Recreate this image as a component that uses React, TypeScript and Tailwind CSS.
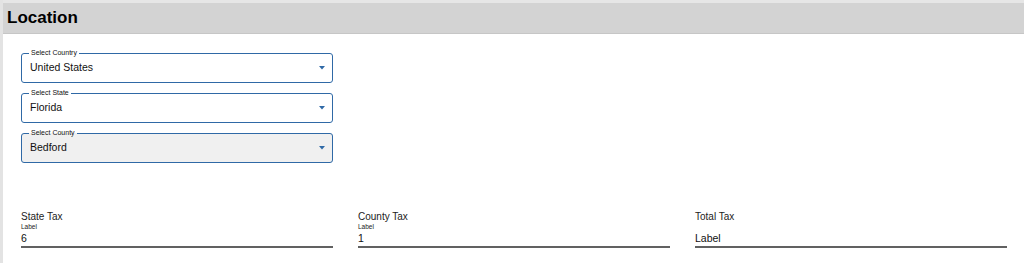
import React from "react";

type SelectProps = { label: string; value: string; filled?: boolean };

const Caret = () => (
  <svg width="6" height="4" viewBox="0 0 6 4" className="shrink-0">
    <path d="M0 0 L6 0 L3 3.5 Z" fill="#2f69a6" />
  </svg>
);

const SelectField: React.FC<SelectProps> = ({ label, value, filled }) => (
  <fieldset
    className={`w-[312px] h-[34px] rounded-[3px] border border-[#2f69a6] pl-[8px] pr-[7px] ${
      filled ? "bg-[#f0f0f0]" : "bg-white"
    }`}
  >
    <legend className="ml-[-1px] px-[2px] text-[7px] leading-[8px] text-[#111]">{label}</legend>
    <div className="flex h-[22px] items-center justify-between">
      <span className="text-[10.5px] text-[#111]">{value}</span>
      <Caret />
    </div>
  </fieldset>
);

type TaxProps = { title: string; sub?: string; value: string };

const TaxField: React.FC<TaxProps> = ({ title, sub, value }) => (
  <div className="flex flex-col">
    <span className="text-[10px] leading-[12px] text-[#222]">{title}</span>
    <span className="h-[8px] text-[6.5px] leading-[8px] text-[#222]">{sub ?? ""}</span>
    <span className="text-[10.5px] leading-[14px] text-[#111]">{value}</span>
    <div className="mt-[1px] h-[2px] bg-[#616161]" />
  </div>
);

export default function App() {
  return (
    <div
      className="h-[263px] w-[1024px] overflow-hidden border-l-[3px] border-[#e3e3e3] bg-white"
      style={{ fontFamily: '"Liberation Sans", Arial, sans-serif' }}
    >
      <div className="flex h-[34px] items-center border-t-[3px] border-b border-t-[#e6e6e6] border-b-[#c6c6c6] bg-[#d3d3d3] pl-[4px]">
        <h1 className="text-[17px] font-bold text-black">Location</h1>
      </div>

      <div className="flex flex-col gap-[6px] pl-[18px] pt-[15px]">
        <SelectField label="Select Country" value="United States" />
        <SelectField label="Select State" value="Florida" />
        <SelectField label="Select County" value="Bedford" filled />
      </div>

      <div className="mt-[48px] grid grid-cols-[312px_312px_312px] gap-[25px] pl-[18px]">
        <TaxField title="State Tax" sub="Label" value="6" />
        <TaxField title="County Tax" sub="Label" value="1" />
        <TaxField title="Total Tax" value="Label" />
      </div>
    </div>
  );
}
